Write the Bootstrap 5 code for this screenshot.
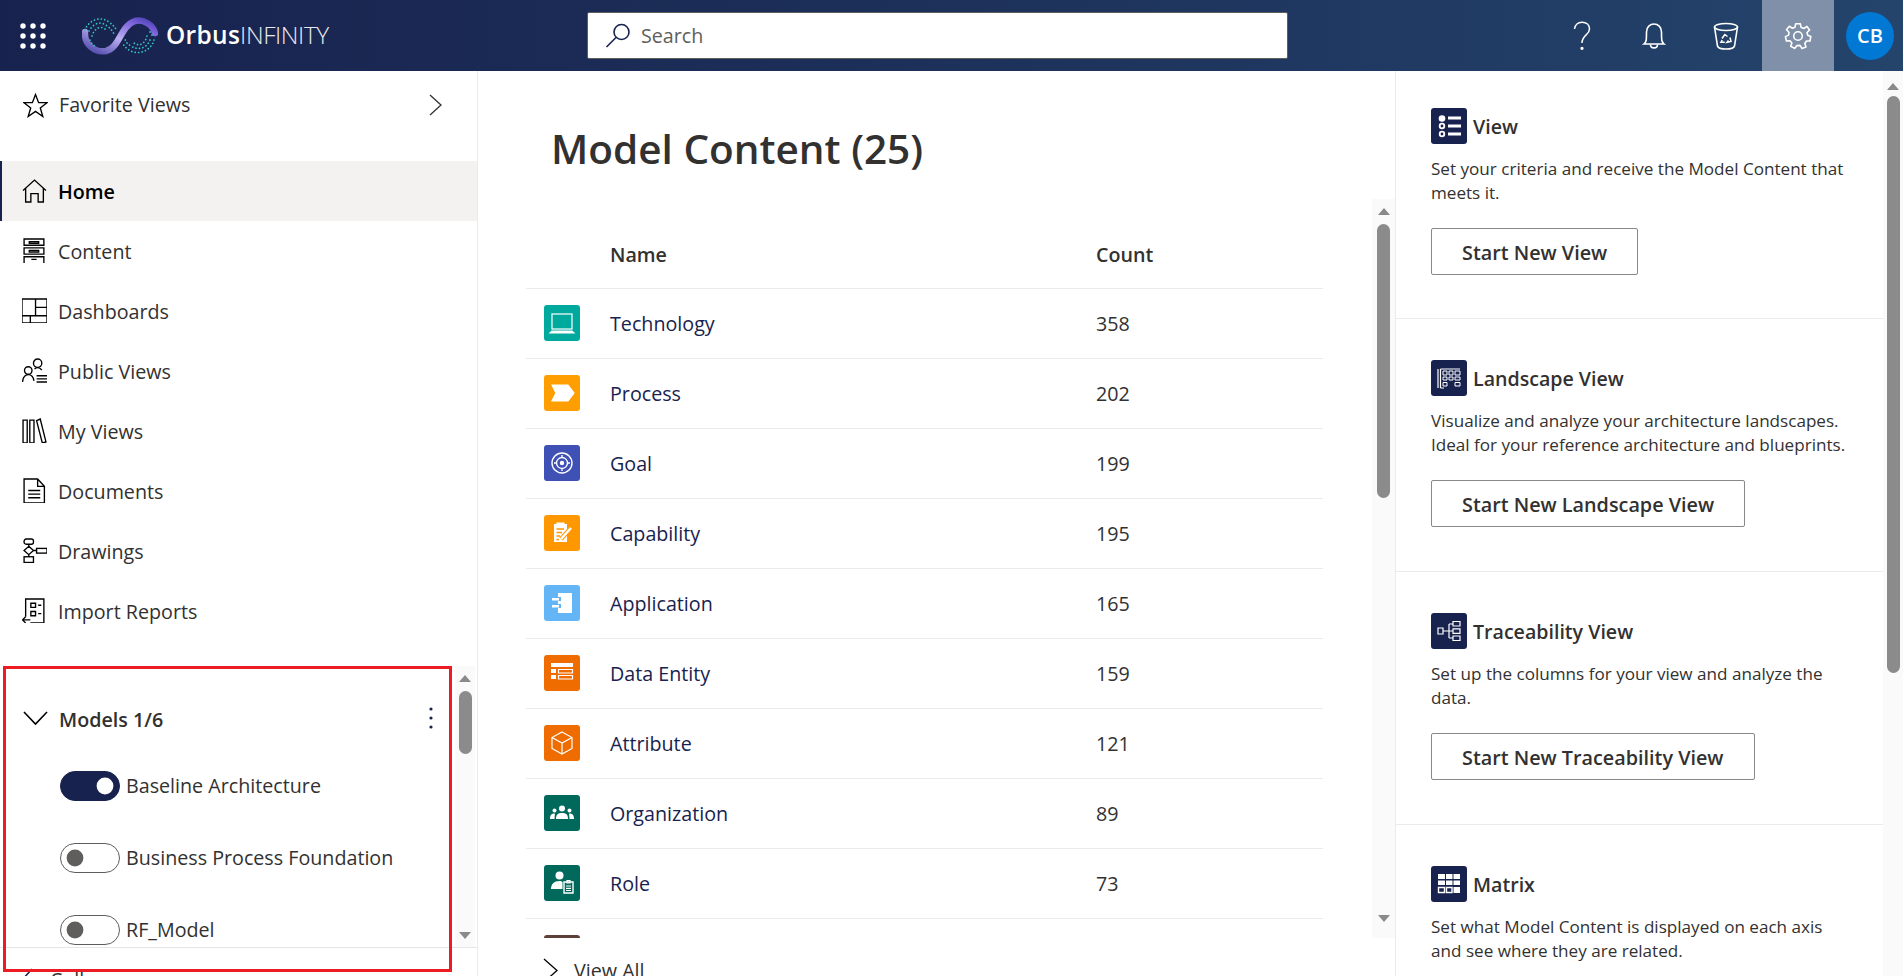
<!DOCTYPE html>
<html lang="en">
<head>
<meta charset="utf-8">
<title>Orbus Infinity</title>
<link href="https://cdn.jsdelivr.net/npm/bootstrap@5.3.0/dist/css/bootstrap.min.css" rel="stylesheet">
<style>
html,body{height:100%;overflow:hidden}
body{font-family:"Open Sans","Noto Sans",sans-serif;font-size:19.7px;color:#323130;background:#fff}
.app-head{height:71px;flex:none;background:linear-gradient(90deg,#18224e 0%,#1c2f58 45%,#24446c 100%)}
.waffle{width:28px;height:28px;margin-left:19px;flex:none}
.brand{margin-left:35px;width:315px;flex:none;color:#fff;font-family:"Open Sans",sans-serif;font-size:24.5px;line-height:1}
.brand svg{width:76px;height:40px;flex:none;margin-right:8px}
.brand b{font-weight:600;letter-spacing:.3px}
.brand i{font-style:normal;font-weight:300;letter-spacing:-.4px;opacity:.9}
.searchbox{width:701px;height:47px;margin-left:190px;flex:none;background:#fff;border:1px solid #605e5c;border-radius:2px;color:#605e5c;padding-left:17px}
.searchbox svg{width:26px;height:26px;margin-right:10px}
.head-tools{margin-left:auto}
.tool{width:72px;height:71px;flex:none}
.tool.on{background:#7f90a8}
.avatar{width:48px;height:48px;border-radius:50%;background:#0078d4;color:#fff;font-weight:600;font-size:20px;margin:0 9px 0 12px}
.app-body{height:905px;flex:none}
.side{width:478px;flex:none;border-right:1px solid #edebe9;height:100%;overflow:hidden}
.fav-row{height:90px;padding:0 35px 22px 23px;flex:none}
.ico{width:25px;height:25px;flex:none;margin-right:11px;fill:none;stroke:#000;stroke-width:1.3}
.nav-row{height:60px;padding:2px 0 0 22px;color:#323130;text-decoration:none;flex:none}
.nav-row .ico{margin-top:-3px}
.nav-row.cur{background:#f3f2f1;border-left:2px solid #18224e;padding-left:20px;color:#000;font-weight:600}
.models-wrap{margin-top:25px;height:282px;flex:none;border-bottom:1px solid #e6e6e6;position:relative}
.models{width:455px;padding:0 23px;overflow:hidden}
.models-top{height:105px;padding-top:2px;font-weight:600}
.models-top .ico{margin-right:11px;margin-top:-3px;stroke-width:1.6}
.kebab{margin-left:auto;margin-right:-1px;margin-top:-3px;color:#18224e}
.sw{height:72px;padding:0 0 0 37px;margin:0;min-height:0}
.sw .form-check-input{width:60px;height:30px;margin:0 6px 0 0;float:none;flex:none;border:1px solid #605e5c;box-shadow:none;background-size:auto 100%;background-position:left center;background-image:url("data:image/svg+xml,%3csvg xmlns='http://www.w3.org/2000/svg' viewBox='-4 -4 8 8'%3e%3ccircle r='2.4' fill='%23605e5c'/%3e%3c/svg%3e")}
.sw .form-check-input:checked{background-color:#18224e;border-color:#18224e;background-position:right center;background-image:url("data:image/svg+xml,%3csvg xmlns='http://www.w3.org/2000/svg' viewBox='-4 -4 8 8'%3e%3ccircle r='2.4' fill='%23fff'/%3e%3c/svg%3e")}
.sw .form-check-label{color:#323130}
.fake-bar{background:#fafafa;align-items:center;flex:none}
.bar-side{width:20px}
.tri-up,.tri-down{width:0;height:0;border-left:6px solid transparent;border-right:6px solid transparent;flex:none}
.tri-up{border-bottom:7px solid #8a8a8a}
.tri-down{border-top:7px solid #8a8a8a}
.thumb{background:#8b8b8b;border-radius:7px;width:13px;flex:none}
.t-side{height:63px;margin-top:9px}
.mt-arrow{margin-top:9px}
.side-foot{padding:20px 0 0 20px;position:relative;line-height:1.2;flex:none}
.side-foot svg{flex:none;margin-right:16px}
.redbox{position:absolute;left:3px;top:0;width:449px;height:306px;border:3px solid #ed1c24;z-index:5;pointer-events:none}
.mid{width:917px;flex:none;height:100%;overflow:hidden}
.mid-title{height:128px;flex:none;margin:0;padding:28px 0 0 73px;font-size:40.5px;font-weight:600;color:#323130;font-family:"Open Sans",sans-serif}
.mid-body{height:739px;flex:none}
.list-clip{width:894px;padding-left:48px;overflow:hidden;flex:none}
.tbl{width:797px;table-layout:fixed;margin:0;border-collapse:collapse}
.tbl th{height:89px;padding:24px 0 0;font-weight:600;color:#323130;border-bottom:1px solid #edebe9;background:none;vertical-align:middle;box-shadow:none}
.tbl td{height:70px;padding:2px 0 0;vertical-align:middle;color:#18224e;border-bottom:1px solid #edebe9;background:none;box-shadow:none}
.tbl td.cnt{color:#323130}
.tile{width:36px;height:36px;border-radius:3px;margin:-2px 0 0 18px;display:flex;align-items:center;justify-content:center}
.tile svg{width:30px;height:30px;fill:none;stroke:#fff;stroke-width:1.2}
.bar-mid{width:23px}
.t-mid{height:274px;margin-top:9px}
.view-all{padding:20px 0 0 60px;line-height:1.2;flex:none}
.right{flex:1 1 auto;border-left:1px solid #edebe9;height:100%;min-width:0}
.panel{width:487px;overflow:hidden;flex:none}
.sect{height:253px;padding:41px 30px 0 35px;border-bottom:1px solid #edebe9;flex:none}
.sect:first-child{height:248px;padding-top:37px}
.sq{width:36px;height:36px;border-radius:3px;background:#18224e;flex:none;margin-right:6px;display:flex;align-items:center;justify-content:center}
.sq svg{width:28px;height:28px;fill:none;stroke:#fff;stroke-width:1.2}
.sect-title{font-weight:600;font-size:19.6px;color:#323130;padding-top:1px}
.sect p{font-size:17.1px;line-height:24px;margin:13px 0 23px;color:#323130}
.start-btn{height:47px;padding:3px 30px 0;font-size:19.8px;font-weight:600;border:1px solid #8a8886;border-radius:2px;color:#323130;background:#fff;line-height:1}
.start-btn:hover{background:#f3f2f1;color:#323130}
.bar-right{width:20px;padding-top:8px}
.t-right{height:577px;margin-top:6px}
</style>
</head>
<body class="d-flex flex-column">
<header class="app-head d-flex align-items-center">
  <svg class="waffle" viewBox="0 0 28 28" fill="#fff"><circle cx="4" cy="4" r="2.7"/><circle cx="14" cy="4" r="2.7"/><circle cx="24" cy="4" r="2.7"/><circle cx="4" cy="14" r="2.7"/><circle cx="14" cy="14" r="2.7"/><circle cx="24" cy="14" r="2.7"/><circle cx="4" cy="24" r="2.7"/><circle cx="14" cy="24" r="2.7"/><circle cx="24" cy="24" r="2.7"/></svg>
  <div class="brand d-flex align-items-center">
    <svg viewBox="0 0 76 40" fill="none">
      <defs><linearGradient id="lg" x1="0" y1="1" x2="1" y2="0"><stop offset="0" stop-color="#4b45a8"/><stop offset=".45" stop-color="#bcaef2"/><stop offset=".8" stop-color="#7c62dc"/><stop offset="1" stop-color="#4a3fb0"/></linearGradient></defs>
      <path d="M3 16C2 29 13 37 24 35C38 32 38 10 53 5C62 3 71 9 73 17" stroke="url(#lg)" stroke-width="6.5" stroke-linecap="round"/>
      <g stroke="#37c6c0" stroke-linecap="round" stroke-width="1.7" stroke-dasharray=".1 3.4">
        <path d="M3 14C6 5 18-1 27 6C31 9 33 11 35 15"/><path d="M7 15C11 8 18 4 25 10C28 12 30 14 32 18"/><path d="M10 20C12 13 18 9 23 13"/><path d="M8 24C9 27 11 29 13 30"/>
        <path d="M72 24C69 35 56 40 47 34C44 32 42 30 40 26"/><path d="M68 24C65 32 56 35 49 30C46 28 44 27 43 23"/><path d="M65 20C63 28 57 31 52 27"/><path d="M70 19C69 17 68 16 67 15"/>
      </g>
    </svg>
    <span><b>Orbus</b><i>INFINITY</i></span>
  </div>
  <div class="searchbox d-flex align-items-center">
    <svg viewBox="0 0 26 26" fill="none" stroke="#18224e" stroke-width="1.6"><circle cx="16.5" cy="9" r="7.5"/><path d="M11 14.5L1.5 24"/></svg>Search
  </div>
  <div class="head-tools d-flex align-items-center">
    <div class="tool d-flex align-items-center justify-content-center"><svg width="18" height="30" viewBox="0 0 18 30" fill="none" stroke="#fff" stroke-width="1.5"><path d="M1.5 8C2 4 5 1.2 9 1.2C13.5 1.2 16.5 4 16.5 8C16.5 14 9 14 9 22"/><circle cx="9" cy="27.3" r=".9" fill="#fff"/></svg></div>
    <div class="tool d-flex align-items-center justify-content-center"><svg width="24" height="26" viewBox="0 0 24 26" fill="none" stroke="#fff" stroke-width="1.6"><path d="M2 21C4.500 19 4.500 17 4.500 9C4.500 4 8 1 12 1C16 1 19.500 4 19.500 9C19.500 17 19.500 19 22 21Z"/><path d="M8.500 21.500C8.500 26 15.500 26 15.500 21.500"/></svg></div>
    <div class="tool d-flex align-items-center justify-content-center"><svg width="26" height="28" viewBox="0 0 26 28" fill="none" stroke="#fff" stroke-width="1.6"><ellipse cx="13" cy="5" rx="11.500" ry="3.500"/><path d="M1.500 5L4.500 24C5 26.500 8 27 13 27C18 27 21 26.500 21.500 24L24.500 5"/><path d="M9 16.500L11.800 12.500L14.500 14.500M17 15.500L18 19.500L14 20.300L15.500 18.500M11.800 20.300H8L9.200 18" stroke-width="1.500"/></svg></div>
    <div class="tool on d-flex align-items-center justify-content-center"><svg width="28" height="28" viewBox="0 0 28 28" fill="none" stroke="#fff" stroke-width="1.6"><circle cx="14" cy="14" r="4.300"/><path d="M11.700 1.700H16.300L17 5.300L19.800 6.500L22.900 4.400L25.600 8L23 10.500L23.700 13.300L26.800 14.500L26 19L22.500 19L20.800 21.500L22 25L18 26.500L16 23.400L13 23.600L10.600 26.400L6.700 24.300L7.900 20.900L6 18.700L2.400 19L1.400 14.600L4.600 13.100L5 10.200L2.500 7.700L5.300 4.300L8.400 6.200L11 5.200Z" stroke-linejoin="round"/></svg></div>
    <div class="avatar d-flex align-items-center justify-content-center">CB</div>
  </div>
</header>

<div class="app-body d-flex">
  <aside class="side d-flex flex-column">
    <div class="fav-row d-flex align-items-center">
      <svg class="ico" viewBox="0 0 24 24"><path d="M12 1.500L15 9.300H23L16.600 14.300L19 22.500L12 17.700L5 22.500L7.400 14.300L1 9.300H9Z"/></svg>
      <span>Favorite Views</span>
      <svg class="ms-auto" width="13" height="22" viewBox="0 0 13 22" fill="none" stroke="#323130" stroke-width="1.300"><path d="M1 1L12 11L1 21"/></svg>
    </div>
    <nav class="nav flex-column flex-nowrap">
      <a class="nav-row cur d-flex align-items-center" href="#"><svg class="ico" viewBox="0 0 24 24" stroke-width="1.5"><path d="M1 12L12 2L23 12M3.500 10V23H8.500V15H15.500V23H20.500V10"/></svg>Home</a>
      <a class="nav-row d-flex align-items-center" href="#"><svg class="ico" viewBox="0 0 24 24"><path d="M2 1H21V7H2ZM2 9.500H21V15.500H2ZM2 24V18H21V24M7 3.500H16V5H7ZM7 12H16V13.500H7ZM9 20.500H14"/></svg>Content</a>
      <a class="nav-row d-flex align-items-center" href="#"><svg class="ico" viewBox="0 0 24 24" stroke-width="1.500"><path d="M0 1H24V24H0ZM13 1V17M0 17H24M13 9H24M8 17V24"/></svg>Dashboards</a>
      <a class="nav-row d-flex align-items-center" href="#"><svg class="ico" viewBox="0 0 24 24"><circle cx="15" cy="5" r="4"/><circle cx="6" cy="12" r="3.600"/><path d="M.500 23C1 18.500 3 16 6 16C9 16 11 18.500 11.500 22M12 10.500C14 9 17 9 19 11.500M14 17H24M14 20H24M14 23H24"/></svg>Public Views</a>
      <a class="nav-row d-flex align-items-center" href="#"><svg class="ico" viewBox="0 0 24 24"><path d="M1 2H5V24H1ZM7.500 2H11.500V24H7.500ZM14 2.500L17.500 1L23 23L19.500 24Z"/></svg>My Views</a>
      <a class="nav-row d-flex align-items-center" href="#"><svg class="ico" viewBox="0 0 24 24"><path d="M2 1H15L21.500 8V24H2ZM15 1V8H21.500M6 12H17.500M6 15.500H17.500M6 19H17.500"/></svg>Documents</a>
      <a class="nav-row d-flex align-items-center" href="#"><svg class="ico" viewBox="0 0 24 24"><rect x="2" y="1" width="9" height="5" rx="2"/><path d="M6.500 6V8M6.500 8L11 12L6.500 16L2 12ZM11 12H14M6.500 16V18"/><rect x="14" y="10" width="10" height="4.500"/><rect x="2" y="18" width="9" height="5.500"/></svg>Drawings</a>
      <a class="nav-row d-flex align-items-center" href="#"><svg class="ico" viewBox="0 0 24 24"><path d="M3.500 18V1H21V24H8"/><path d="M8.500 5H13V9H8.500ZM8.500 13H13V17H8.500ZM15.500 7H18.500M15.500 15H18.500M8 21H.500M3.500 18L.500 21L3.500 24"/></svg>Import Reports</a>
    </nav>
    <div class="models-wrap d-flex">
      <section class="models">
        <div class="models-top d-flex align-items-center">
          <svg class="ico" viewBox="0 0 25 25"><path d="M1 6L12.500 18L24 6"/></svg><span>Models 1/6</span>
          <svg class="kebab" width="4" height="22" viewBox="0 0 4 22" fill="#18224e"><circle cx="2" cy="2" r="1.600"/><circle cx="2" cy="11" r="1.600"/><circle cx="2" cy="20" r="1.600"/></svg>
        </div>
        <div class="sw form-check form-switch d-flex align-items-start"><input class="form-check-input" type="checkbox" role="switch" id="m1" checked><label class="form-check-label" for="m1">Baseline Architecture</label></div>
        <div class="sw form-check form-switch d-flex align-items-start"><input class="form-check-input" type="checkbox" role="switch" id="m2"><label class="form-check-label" for="m2">Business Process Foundation</label></div>
        <div class="sw form-check form-switch d-flex align-items-start"><input class="form-check-input" type="checkbox" role="switch" id="m3"><label class="form-check-label" for="m3">RF_Model</label></div>
      </section>
      <div class="fake-bar bar-side d-flex flex-column">
        <span class="tri-up mt-arrow"></span><span class="thumb t-side"></span><span class="tri-down mt-auto mb-2"></span>
      </div>
      <div class="redbox"></div>
    </div>
    <div class="side-foot d-flex align-items-start"><svg width="14" height="24" viewBox="0 0 14 24" fill="none" stroke="#18224e" stroke-width="1.5"><path d="M12 1L2 12L12 23"/></svg>Collapse</div>
  </aside>

  <main class="mid d-flex flex-column">
    <h1 class="mid-title d-flex align-items-center">Model Content (25)</h1>
    <div class="mid-body d-flex">
      <div class="list-clip">
        <table class="table tbl">
          <colgroup><col style="width:84px"><col style="width:486px"><col></colgroup>
          <thead><tr><th></th><th>Name</th><th>Count</th></tr></thead>
          <tbody>
            <tr><td><div class="tile" style="background:#00a99d"><svg viewBox="0 0 30 30"><rect x="5" y="6" width="20" height="15"/><path d="M3 25L5 23H25L27 25Z" fill="#fff"/></svg></div></td><td>Technology</td><td class="cnt">358</td></tr>
            <tr><td><div class="tile" style="background:#ff9e00"><svg viewBox="0 0 30 30"><path d="M5 7H21L27 15L21 23H5L9 15Z" fill="#fff"/></svg></div></td><td>Process</td><td class="cnt">202</td></tr>
            <tr><td><div class="tile" style="background:#3f51b5"><svg viewBox="0 0 30 30"><circle cx="15" cy="15" r="10" stroke-width="1.400"/><path d="M15 9.500C18 9.500 20.500 12 20.500 15C20.500 18 18 20.500 15 20.500C12 20.500 9.500 18 9.500 15C9.500 12 12 9.500 15 9.500ZM15 7V10M15 20V23M7 15H10M20 15H23" stroke-width="1.400"/><circle cx="15" cy="15" r="1.600" fill="#fff"/></svg></div></td><td>Goal</td><td class="cnt">199</td></tr>
            <tr><td><div class="tile" style="background:#ff9800"><svg viewBox="0 0 30 30"><path d="M7 6H20V24H7Z" fill="#fff" stroke="none"/><path d="M10 5H17V8H10Z" fill="#fff"/><path d="M9.500 11H17M9.500 14.500H15M9.500 18H13M9.500 21.500H12" stroke="#ff9800" stroke-width="1.500"/><path d="M14 21L24 10" stroke="#ff9800" stroke-width="4.500"/><path d="M14 21L24 10" stroke="#fff" stroke-width="2.500"/></svg></div></td><td>Capability</td><td class="cnt">195</td></tr>
            <tr><td><div class="tile" style="background:#64b5f6"><svg viewBox="0 0 30 30"><path d="M11 5H25V25H11V20H14V16H11V13H14V9H11Z" fill="#fff" stroke="none"/><path d="M5 10H12V12.500H5ZM5 17H12V19.500H5Z" fill="#fff" stroke="none"/></svg></div></td><td>Application</td><td class="cnt">165</td></tr>
            <tr><td><div class="tile" style="background:#ef6c00"><svg viewBox="0 0 30 30"><path d="M4 5H26V9H4ZM4 11H9V15H4ZM4 17H9V21H4Z" fill="#fff" stroke="none"/><path d="M11.500 11.500H25.500V15H11.500ZM11.500 17.500H25.500V21H11.500Z"/></svg></div></td><td>Data Entity</td><td class="cnt">159</td></tr>
            <tr><td><div class="tile" style="background:#ef6c00"><svg viewBox="0 0 30 30"><path d="M15 4L25 9.500V20.500L15 26L5 20.500V9.500ZM5 9.500L15 15L25 9.500M15 15V26"/></svg></div></td><td>Attribute</td><td class="cnt">121</td></tr>
            <tr><td><div class="tile" style="background:#00695c"><svg viewBox="0 0 30 30" fill="#fff"><g fill="#fff" stroke="none"><circle cx="15" cy="10.500" r="3"/><circle cx="7.500" cy="12.500" r="2"/><circle cx="22.500" cy="12.500" r="2"/><path d="M9 21C9 16.500 11 15 15 15C19 15 21 16.500 21 21ZM3 21C3 17 4.500 15.500 7.500 15.500C8 15.500 8 16 7.800 17L7.500 21ZM27 21C27 17 25.500 15.500 22.500 15.500C22 15.500 22 16 22.200 17L22.500 21Z"/></g></svg></div></td><td>Organization</td><td class="cnt">89</td></tr>
            <tr><td><div class="tile" style="background:#00695c"><svg viewBox="0 0 30 30"><g fill="#fff" stroke="none"><circle cx="12.500" cy="7.500" r="4"/><path d="M4 21C4 16 7 13 12.500 13C13.500 13 15 13.500 15.500 14V21Z"/></g><path d="M17 14H26V25H17Z" stroke-width="1.400"/><path d="M20 12.500H23V15H20ZM19 18H24M19 20.300H24M19 22.500H24"/></svg></div></td><td>Role</td><td class="cnt">73</td></tr>
            <tr><td><div class="tile" style="background:#5d4037"></div></td><td></td><td class="cnt"></td></tr>
          </tbody>
        </table>
      </div>
      <div class="fake-bar bar-mid d-flex flex-column">
        <span class="tri-up mt-arrow"></span><span class="thumb t-mid"></span><span class="tri-down mt-auto mb-3"></span>
      </div>
    </div>
    <div class="view-all d-flex align-items-center"><svg class="ico" viewBox="0 0 25 25" stroke-width="1.500"><path d="M6 1L19 12.500L6 24"/></svg>View All</div>
  </main>

  <aside class="right d-flex">
    <div class="panel d-flex flex-column">
      <section class="sect">
        <div class="d-flex align-items-center"><div class="sq"><svg viewBox="0 0 28 28"><g fill="#fff" stroke="none"><circle cx="7" cy="6.500" r="3.300"/><path d="M13 4.500H26V7.500H13ZM13 12.500H26V15.500H13ZM13 20.500H26V23.500H13Z"/></g><circle cx="7" cy="14" r="2.300" stroke-width="1.800"/><circle cx="7" cy="22" r="2.300" stroke-width="1.800"/></svg></div><span class="sect-title">View</span></div>
        <p>Set your criteria and receive the Model Content that meets it.</p>
        <button class="btn start-btn" type="button">Start New View</button>
      </section>
      <section class="sect">
        <div class="d-flex align-items-center"><div class="sq"><svg viewBox="0 0 28 28"><path d="M3 5V24M5.500 5H25M5.500 24H9M5.500 5V24"/><path d="M8 7H12V11H8ZM14 7H18V11H14ZM20 7H25V11H20ZM8 13H12V16H8ZM20 13H25V16H20ZM14 13H18V16H14ZM8 18.500H12V22H8ZM20 18.500H25V22H20Z" stroke-width="1"/></svg></div><span class="sect-title">Landscape View</span></div>
        <p>Visualize and analyze your architecture landscapes. Ideal for your reference architecture and blueprints.</p>
        <button class="btn start-btn" type="button">Start New Landscape View</button>
      </section>
      <section class="sect">
        <div class="d-flex align-items-center"><div class="sq"><svg viewBox="0 0 28 28"><path d="M3 11H8V17H3ZM8 14H14M14 7V21M14 7H18M14 14H18M14 21H18"/><path d="M18 4.500H25V9H18ZM18 11.800H25V16.300H18ZM18 19H25V23.500H18Z"/></svg></div><span class="sect-title">Traceability View</span></div>
        <p>Set up the columns for your view and analyze the data.</p>
        <button class="btn start-btn" type="button">Start New Traceability View</button>
      </section>
      <section class="sect">
        <div class="d-flex align-items-center"><div class="sq"><svg viewBox="0 0 28 28"><g fill="#fff" stroke="none"><path d="M3 4H10V9H3ZM11 4H17.500V9H11ZM18.500 4H25V9H18.500ZM3 10.500H10V15H3ZM11 10.500H17.500V15H11ZM18.500 10.500H25V15H18.500ZM18.500 17H25V23H18.500Z"/></g><path d="M3.500 17.500H9.500V22.500H3.500ZM11.500 17.500H17V22.500H11.500Z" stroke-width="1.400"/></svg></div><span class="sect-title">Matrix</span></div>
        <p>Set what Model Content is displayed on each axis and see where they are related.</p>
      </section>
    </div>
    <div class="fake-bar bar-right d-flex flex-column flex-fill">
      <span class="tri-up mt-1"></span><span class="thumb t-right"></span>
    </div>
  </aside>
</div>
</body>
</html>
